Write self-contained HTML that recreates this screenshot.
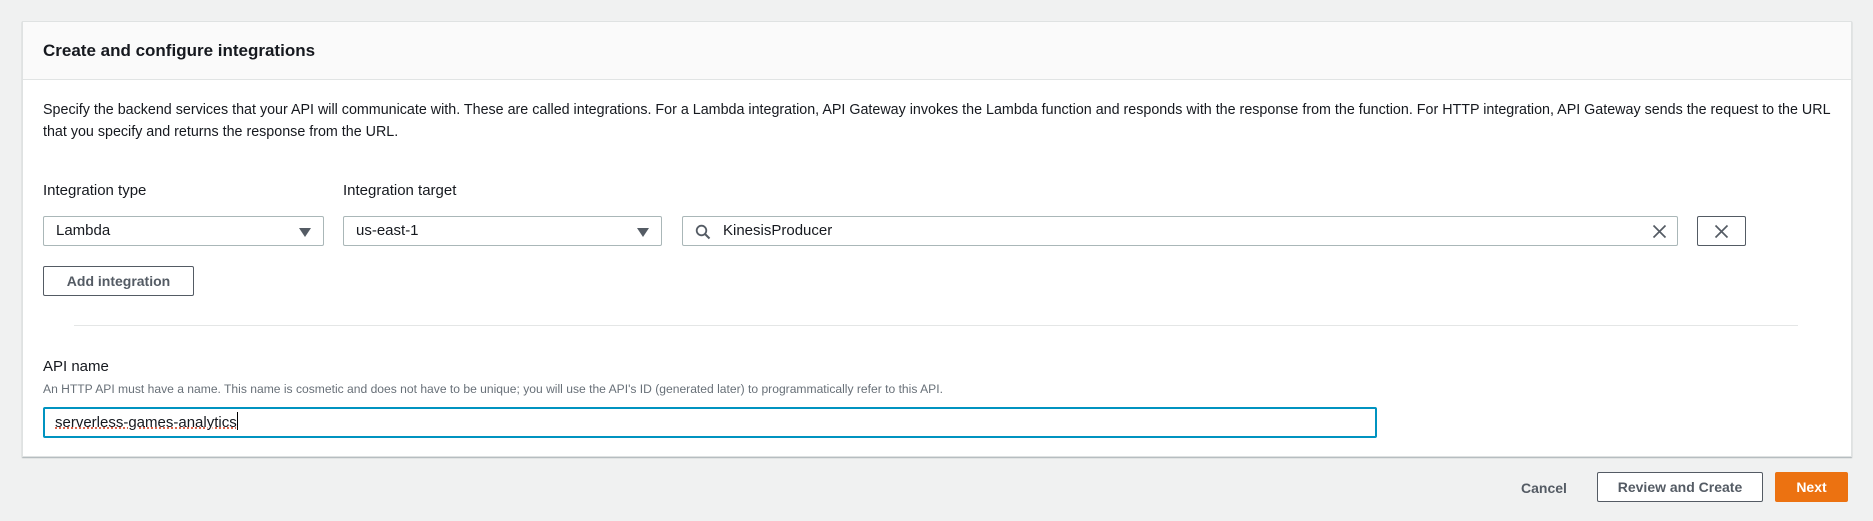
<!DOCTYPE html>
<html><head><style>
*{box-sizing:border-box;margin:0;padding:0}
body{width:1873px;height:521px;background:#f0f1f1;font-family:"Liberation Sans",Arial,sans-serif;color:#16191f;position:relative;overflow:hidden}
.abs{position:absolute}
.panel{left:22px;top:21px;width:1830px;height:436px;background:#fff;border:1px solid #dfe2e2;box-shadow:0 1px 1px rgba(0,28,36,.3)}
.head{left:0;top:0;width:100%;height:58px;background:#fafafa;border-bottom:1px solid #e1e4e4}
.box{border:1px solid #aab7b8;border-radius:2px;background:#fff;height:30px;font-size:15px;line-height:28px;padding-left:12px}
.btn{border:1px solid #545b64;border-radius:2px;background:#fff;font-weight:bold;font-size:14px;color:#545b64;text-align:center;line-height:28px}
.tri{position:absolute;right:12px;top:11px;width:0;height:0;border-left:6px solid transparent;border-right:6px solid transparent;border-top:9px solid #545b64}
</style></head><body>
<div class="abs panel">
 <div class="abs head"></div>
</div>
<div class="abs" style="left:43px;top:40px;font-size:17px;font-weight:bold;line-height:22px">Create and configure integrations</div>
<div class="abs" style="left:43px;top:99px;font-size:14.3px;line-height:22px;white-space:nowrap">Specify the backend services that your API will communicate with. These are called integrations. For a Lambda integration, API Gateway invokes the Lambda function and responds with the response from the function. For HTTP integration, API Gateway sends the request to the URL<br>that you specify and returns the response from the URL.</div>
<div class="abs" style="left:43px;top:181px;font-size:15px;line-height:20px">Integration type</div>
<div class="abs" style="left:343px;top:181px;font-size:15px;line-height:20px">Integration target</div>
<div class="abs box" style="left:43px;top:216px;width:281px">Lambda<span class="tri"></span></div>
<div class="abs box" style="left:343px;top:216px;width:319px">us-east-1<span class="tri"></span></div>
<div class="abs box" style="left:682px;top:216px;width:996px;padding-left:40px">KinesisProducer
 <svg class="abs" style="left:12px;top:7px" width="16" height="16" viewBox="0 0 16 16"><circle cx="6.5" cy="6.5" r="4.8" fill="none" stroke="#545b64" stroke-width="1.8"/><path d="M10 10l4.5 4.5" stroke="#545b64" stroke-width="2"/></svg>
 <svg class="abs" style="right:10px;top:7px" width="15" height="15" viewBox="0 0 15 15"><path d="M1.5 1.5l12 12M13.5 1.5l-12 12" stroke="#545b64" stroke-width="1.7"/></svg>
</div>
<div class="abs btn" style="left:1697px;top:216px;width:49px;height:30px"><svg style="margin-top:7px" width="15" height="15" viewBox="0 0 15 15"><path d="M1.5 1.5l12 12M13.5 1.5l-12 12" stroke="#545b64" stroke-width="1.7"/></svg></div>
<div class="abs btn" style="left:43px;top:266px;width:151px;height:30px">Add integration</div>
<div class="abs" style="left:74px;top:325px;width:1724px;height:1px;background:#e4e6e6"></div>
<div class="abs" style="left:43px;top:357px;font-size:15px;line-height:20px">API name</div>
<div class="abs" style="left:43px;top:382px;font-size:12.1px;line-height:15px;color:#687078;white-space:nowrap">An HTTP API must have a name. This name is cosmetic and does not have to be unique; you will use the API's ID (generated later) to programmatically refer to this API.</div>
<div class="abs box" style="left:43px;top:407px;width:1334px;height:31px;border:2px solid #0093c0;padding-left:10px;line-height:28px"><span style="text-decoration:underline dotted #d13212">serverless-games-analytics</span><span style="display:inline-block;width:1px;height:18px;background:#000;vertical-align:-3px"></span></div>
<div class="abs" style="left:1521px;top:478px;font-size:14px;font-weight:bold;color:#545b64;line-height:20px">Cancel</div>
<div class="abs btn" style="left:1597px;top:472px;width:166px;height:30px">Review and Create</div>
<div class="abs btn" style="left:1775px;top:472px;width:73px;height:30px;background:#ec7211;border-color:#ec7211;color:#fff">Next</div>
</body></html>
